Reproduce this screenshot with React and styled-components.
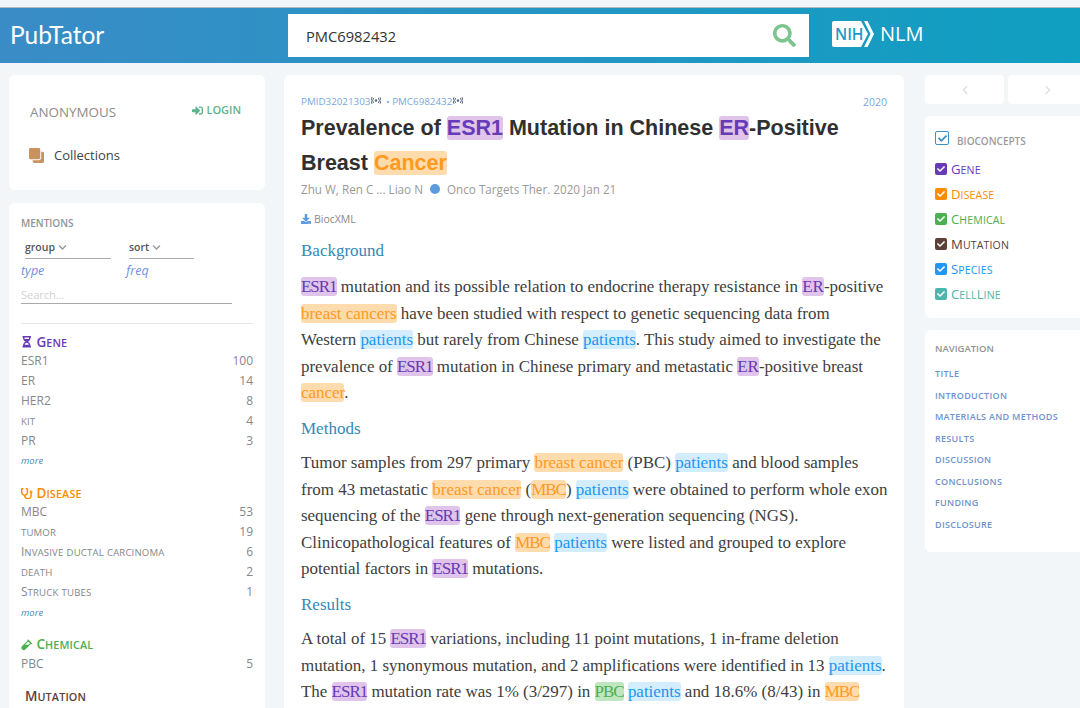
import React from "react";
import styled, { createGlobalStyle } from "styled-components";
import { FaSignInAlt, FaClone, FaDownload, FaSearch, FaCheck, FaStethoscope, FaVial, FaChevronLeft, FaChevronRight, FaChevronDown, FaHourglassHalf } from "react-icons/fa";

const Global = createGlobalStyle`
  html, body { margin: 0; padding: 0; height: 708px; overflow: hidden; background: #f3f6f9; }
  body { font-family: "Open Sans", "Liberation Sans", sans-serif; }
  * { box-sizing: border-box; }
`;

const colors = {
  gene: "#673ab7",
  disease: "#ff8c00",
  chemical: "#4caf50",
  mutation: "#5d4037",
  species: "#2196f3",
  cellline: "#4db6ac",
};

const Page = styled.div`
  width: 1080px;
  height: 708px;
  overflow: hidden;
`;

const TopBar = styled.header`
  margin-top: 7px;
  height: 56px;
  border-top: 1px solid #b4bcc2;
  background: linear-gradient(90deg, #3a8cc6, #0f9fc1);
  display: flex;
  align-items: center;
`;

const Brand = styled.div`
  width: 288px;
  padding: 0 0 2px 10px;
  color: #fff;
  font-family: Lato, "Open Sans", sans-serif;
  font-size: 24.5px;
`;

const SearchBox = styled.div`
  width: 521px;
  height: 43px;
  background: #fff;
  display: flex;
  align-items: center;
  justify-content: space-between;
  padding: 0 13px 0 18px;
  font-size: 14.7px;
  color: #333;
`;

const SearchIcon = styled(FaSearch)`
  font-size: 23px;
  color: #7cc58f;
`;

const NihWrap = styled.div`
  margin-left: 23px;
  display: flex;
  align-items: center;
  gap: 6px;
  color: #fff;
  font-size: 20px;
  margin-top: -4px;
`;

const Columns = styled.main`
  display: flex;
  align-items: flex-start;
  padding: 12px 0 0 9px;
`;

const Left = styled.aside`
  width: 256px;
  display: flex;
  flex-direction: column;
  gap: 13px;
  flex: none;
`;

const Card = styled.section`
  background: #fff;
  border-radius: 6px;
`;

const UserCard = styled(Card)`
  height: 115px;
  padding: 27px 24px 0 20px;
`;

const UserRow = styled.div`
  display: flex;
  justify-content: space-between;
  align-items: flex-start;
  padding-left: 1px;
`;

const Anon = styled.span`
  font-size: 13.4px;
  color: #8c8c8c;
  line-height: 20px;
`;

const Login = styled.span`
  font-size: 11px;
  font-weight: 600;
  color: #5db38e;
  display: flex;
  align-items: center;
  gap: 3px;
  line-height: 18px;
  margin-top: -1px;
`;

const CollectionsRow = styled.div`
  display: flex;
  align-items: center;
  gap: 10px;
  margin-top: 24px;
  font-size: 13px;
  color: #444;
`;

const CollectionIcon = styled(FaClone)`
  font-size: 15px;
  color: #c9925e;
  transform: scaleX(-1);
`;

const MentionCard = styled(Card)`
  padding: 13px 12px 0 12px;
  height: 520px;
`;

const SmallHead = styled.div`
  font-size: 10px;
  font-weight: 600;
  color: #8f9499;
  line-height: 14px;
`;

const Selects = styled.div`
  display: flex;
  margin: 11px 0 0 4px;
  gap: 18px;
`;

const SelectBox = styled.div`
  width: ${(p) => p.$w}px;
  height: 18px;
  border-bottom: 1px solid #aaa;
  font-size: 10.5px;
  font-weight: 600;
  color: #555;
  display: flex;
  align-items: flex-start;
  gap: 3px;
  line-height: 13px;
  svg { font-size: 9px; color: #999; margin-top: 2px; }
`;

const Hints = styled.div`
  display: flex;
  gap: 82px;
  font-size: 12.5px;
  font-style: italic;
  color: #6f8fe0;
  margin-top: 3px;
  line-height: 18px;
`;

const Filter = styled.div`
  width: 211px;
  margin-top: 7px;
  height: 17px;
  border-bottom: 1px solid #aaa;
  font-size: 11px;
  color: #d2d2d2;
  line-height: 15px;
`;

const Divider = styled.div`
  height: 1px;
  background: #e8e8e8;
  margin: 19px 0 0 0;
`;

const GroupHead = styled.div`
  display: flex;
  align-items: center;
  gap: 4px;
  height: 18px;
  font-size: 13.5px;
  font-weight: 600;
  color: ${(p) => p.$color};
  margin-top: ${(p) => p.$top}px;
  margin-left: ${(p) => p.$indent || 0}px;
  line-height: 18px;
  svg { font-size: 11.5px; }
`;

const Low = styled.span`
  text-transform: uppercase;
  font-size: 0.8em;
  letter-spacing: 0.15px;
`;

const Mention = styled.div`
  display: flex;
  justify-content: space-between;
  height: 19.9px;
  font-size: 12px;
  color: #85888c;
  line-height: 19.9px;
`;

const More = styled.div`
  font-size: 9.5px;
  font-style: italic;
  color: #4d86b5;
  height: 22px;
  line-height: 22px;
`;

const Article = styled(Card)`
  width: 620px;
  flex: none;
  margin-left: 19px;
  height: 640px;
  padding: 20px 17px 0 17px;
  overflow: hidden;
`;

const IdRow = styled.div`
  display: flex;
  justify-content: space-between;
  font-size: 9.8px;
  color: #7ba6dc;
  line-height: 14px;
`;

const Ids = styled.span`
  display: flex;
  align-items: center;
  svg { margin: -4px 2px 0 1px; }
`;

const Year = styled.span`
  font-size: 10.5px;
`;

const Title = styled.h1`
  margin: 2px 0 0;
  font-family: "Liberation Sans", Arial, sans-serif;
  font-size: 21.5px;
  font-weight: 700;
  color: #303030;
  line-height: 35px;
`;

const Byline = styled.div`
  display: flex;
  align-items: center;
  font-size: 11.7px;
  color: #9a9a9a;
  line-height: 20px;
  margin-top: -2px;
`;

const Dot = styled.span`
  width: 10px;
  height: 10px;
  border-radius: 50%;
  background: #5b9be0;
  margin: 0 7px 0 7px;
`;

const Bioc = styled.div`
  display: flex;
  align-items: center;
  gap: 3px;
  font-size: 10.5px;
  color: #8a8a8a;
  margin-top: 13px;
  line-height: 14px;
  svg { color: #5b9be0; font-size: 10px; }
`;

const SectionHead = styled.h2`
  margin: ${(p) => p.$top}px 0 0;
  font-family: "Liberation Serif", Georgia, serif;
  font-size: 17px;
  font-weight: 400;
  color: #3588b5;
  line-height: 22px;
`;

const Body = styled.div`
  margin-top: ${(p) => p.$top}px;
  font-family: "Liberation Serif", Georgia, serif;
  font-size: 16.97px;
  color: #404040;
`;

const Line = styled.div`
  white-space: nowrap;
  height: 26.6px;
  line-height: 26.6px;
`;

const Mark = styled.span`
  color: ${(p) => p.$fg};
  background: ${(p) => p.$bg};
  border-radius: 3px;
  letter-spacing: ${(p) => (p.$tight ? "-1px" : "normal")};
`;

const Right = styled.aside`
  margin-left: 21px;
  width: 170px;
  flex: none;
  display: flex;
  flex-direction: column;
`;

const Pager = styled.div`
  display: flex;
  gap: 4px;
`;

const PageBtn = styled.div`
  width: ${(p) => p.$w}px;
  height: 29px;
  background: #fff;
  border-radius: 4px;
  display: flex;
  align-items: center;
  justify-content: center;
  color: #e2e2e2;
  font-size: 10px;
`;

const ConceptCard = styled(Card)`
  margin-top: 12px;
  height: 202px;
  padding: 15px 0 0 10px;
`;

const ConceptHead = styled.div`
  display: flex;
  align-items: flex-start;
  gap: 8px;
  font-size: 10px;
  font-weight: 600;
  color: #9a9a9a;
  height: 15px;
  line-height: 20px;
  margin-bottom: 10px;
`;

const MasterBox = styled.span`
  width: 14px;
  height: 14px;
  border: 1.5px solid #3d8fc4;
  border-radius: 2px;
  color: #3d8fc4;
  display: flex;
  align-items: center;
  justify-content: center;
  font-size: 9px;
`;

const Concept = styled.div`
  display: flex;
  align-items: center;
  gap: 4px;
  height: 25px;
  font-size: 13.2px;
  color: ${(p) => p.$color};
`;

const Tick = styled.span`
  width: 12px;
  height: 12px;
  border-radius: 2px;
  background: ${(p) => p.$color};
  color: #fff;
  display: flex;
  align-items: center;
  justify-content: center;
  font-size: 8px;
`;

const NavCard = styled(Card)`
  margin-top: 12px;
  height: 222px;
  padding: 12px 0 0 10px;
`;

const NavLink = styled.div`
  font-size: 9px;
  font-weight: 600;
  letter-spacing: 0.3px;
  color: #6f93cc;
  line-height: 21.5px;
`;

const NavHead = styled(SmallHead)`
  font-size: 9.5px;
  margin-bottom: 7px;
`;

// lower-case runs drawn as smaller capitals, the old small-caps look
const Caps = ({ text }) => (
  <span>
    {text.split(/([a-z]+)/).map((part, i) => (
      /[a-z]/.test(part) ? <Low key={i}>{part}</Low> : part
    ))}
  </span>
);

const Signal = () => (
  <svg width="10" height="7" viewBox="0 0 10 7" fill="none" stroke="#54657c" strokeWidth="1">
    <circle cx="5" cy="3.5" r="1.2" fill="#54657c" stroke="none" />
    <path d="M2.6 1a4 4 0 0 0 0 5M7.4 1a4 4 0 0 1 0 5M1 .2a6 6 0 0 0 0 6.6M9 .2a6 6 0 0 1 0 6.6" />
  </svg>
);

const NihLogo = () => (
  <svg width="42" height="26" viewBox="0 0 42 26">
    <path d="M2 0H29L36 13L29 26H2Q0 26 0 24V2Q0 0 2 0Z" fill="#fff" />
    <path d="M32 0H35.5L42 13L35.5 26H32L38.5 13Z" fill="#fff" />
    <text x="3" y="19" fontFamily="Open Sans, sans-serif" fontSize="15.5" fontWeight="600" fill="#1b9dc3">NIH</text>
  </svg>
);

const Tag = ({ type, tight, children }) => {
  const styles = {
    gene: ["#673ab7", "#e1c4ea"],
    disease: ["#ff9a1f", "#ffdcae"],
    species: ["#2196f3", "#d4edfd"],
    chemical: ["#4caf50", "#bfe6c0"],
  };
  return <Mark $fg={styles[type][0]} $bg={styles[type][1]} $tight={tight}>{children}</Mark>;
};

const Esr = () => <Tag type="gene" tight>ESR1</Tag>;
const Mbc = () => <Tag type="disease" tight>MBC</Tag>;

const geneList = [["ESR1", 100], ["ER", 14], ["HER2", 8], ["kit", 4], ["PR", 3]];
const diseaseList = [["MBC", 53], ["tumor", 19], ["Invasive ductal carcinoma", 6], ["death", 2], ["Struck tubes", 1]];
const concepts = [
  ["Gene", colors.gene],
  ["Disease", colors.disease],
  ["Chemical", colors.chemical],
  ["Mutation", colors.mutation],
  ["Species", colors.species],
  ["CellLine", colors.cellline],
];
const navItems = ["Title", "Introduction", "Materials and Methods", "Results", "Discussion", "Conclusions", "Funding", "Disclosure"];

const MentionList = ({ items }) => items.map(([name, count]) => (
  <Mention key={name}><Caps text={name} /><span>{count}</span></Mention>
));

export default function App() {
  return (
    <Page>
      <Global />
      <TopBar>
        <Brand>PubTator</Brand>
        <SearchBox>PMC6982432<SearchIcon /></SearchBox>
        <NihWrap><NihLogo />NLM</NihWrap>
      </TopBar>
      <Columns>
        <Left>
          <UserCard>
            <UserRow>
              <Anon>ANONYMOUS</Anon>
              <Login><FaSignInAlt />LOGIN</Login>
            </UserRow>
            <CollectionsRow><CollectionIcon />Collections</CollectionsRow>
          </UserCard>
          <MentionCard>
            <SmallHead>MENTIONS</SmallHead>
            <Selects>
              <SelectBox $w={86}>group <FaChevronDown /></SelectBox>
              <SelectBox $w={65}>sort <FaChevronDown /></SelectBox>
            </Selects>
            <Hints><span>type</span><span>freq</span></Hints>
            <Filter>Search...</Filter>
            <Divider />
            <GroupHead $color={colors.gene} $top={9}><FaHourglassHalf /><Caps text="Gene" /></GroupHead>
            <MentionList items={geneList} />
            <More>more</More>
            <GroupHead $color={colors.disease} $top={12}><FaStethoscope /><Caps text="Disease" /></GroupHead>
            <MentionList items={diseaseList} />
            <More>more</More>
            <GroupHead $color={colors.chemical} $top={12}><FaVial /><Caps text="Chemical" /></GroupHead>
            <MentionList items={[["PBC", 5]]} />
            <GroupHead $color={colors.mutation} $top={14} $indent={4}><Caps text="Mutation" /></GroupHead>
          </MentionCard>
        </Left>
        <Article>
          <IdRow>
            <Ids>PMID32021303<Signal />&nbsp;• PMC6982432<Signal /></Ids>
            <Year>2020</Year>
          </IdRow>
          <Title>Prevalence of <Tag type="gene">ESR1</Tag> Mutation in Chinese <Tag type="gene">ER</Tag>-Positive<br />Breast <Tag type="disease">Cancer</Tag></Title>
          <Byline>Zhu W, Ren C ... Liao N<Dot />Onco Targets Ther. 2020 Jan 21</Byline>
          <Bioc><FaDownload />BiocXML</Bioc>
          <SectionHead $top={14}>Background</SectionHead>
          <Body $top={12}>
            <Line><Esr /> mutation and its possible relation to endocrine therapy resistance in <Tag type="gene">ER</Tag>-positive</Line>
            <Line><Tag type="disease">breast cancers</Tag> have been studied with respect to genetic sequencing data from</Line>
            <Line>Western <Tag type="species">patients</Tag> but rarely from Chinese <Tag type="species">patients</Tag>. This study aimed to investigate the</Line>
            <Line>prevalence of <Esr /> mutation in Chinese primary and metastatic <Tag type="gene">ER</Tag>-positive breast</Line>
            <Line><Tag type="disease">cancer</Tag>.</Line>
          </Body>
          <SectionHead $top={11}>Methods</SectionHead>
          <Body $top={10}>
            <Line>Tumor samples from 297 primary <Tag type="disease">breast cancer</Tag> (PBC) <Tag type="species">patients</Tag> and blood samples</Line>
            <Line>from 43 metastatic <Tag type="disease">breast cancer</Tag> (<Mbc />) <Tag type="species">patients</Tag> were obtained to perform whole exon</Line>
            <Line>sequencing of the <Esr /> gene through next-generation sequencing (NGS).</Line>
            <Line>Clinicopathological features of <Mbc /> <Tag type="species">patients</Tag> were listed and grouped to explore</Line>
            <Line>potential factors in <Esr /> mutations.</Line>
          </Body>
          <SectionHead $top={11}>Results</SectionHead>
          <Body $top={10}>
            <Line>A total of 15 <Esr /> variations, including 11 point mutations, 1 in-frame deletion</Line>
            <Line>mutation, 1 synonymous mutation, and 2 amplifications were identified in 13 <Tag type="species">patients</Tag>.</Line>
            <Line>The <Esr /> mutation rate was 1% (3/297) in <Tag type="chemical" tight>PBC</Tag> <Tag type="species">patients</Tag> and 18.6% (8/43) in <Mbc /></Line>
          </Body>
        </Article>
        <Right>
          <Pager>
            <PageBtn $w={79}><FaChevronLeft /></PageBtn>
            <PageBtn $w={79}><FaChevronRight /></PageBtn>
          </Pager>
          <ConceptCard>
            <ConceptHead><MasterBox><FaCheck /></MasterBox>BIOCONCEPTS</ConceptHead>
            {concepts.map(([name, color]) => (
              <Concept key={name} $color={color}><Tick $color={color}><FaCheck /></Tick><Caps text={name} /></Concept>
            ))}
          </ConceptCard>
          <NavCard>
            <NavHead>NAVIGATION</NavHead>
            {navItems.map((item) => <NavLink key={item}>{item.toUpperCase()}</NavLink>)}
          </NavCard>
        </Right>
      </Columns>
    </Page>
  );
}
